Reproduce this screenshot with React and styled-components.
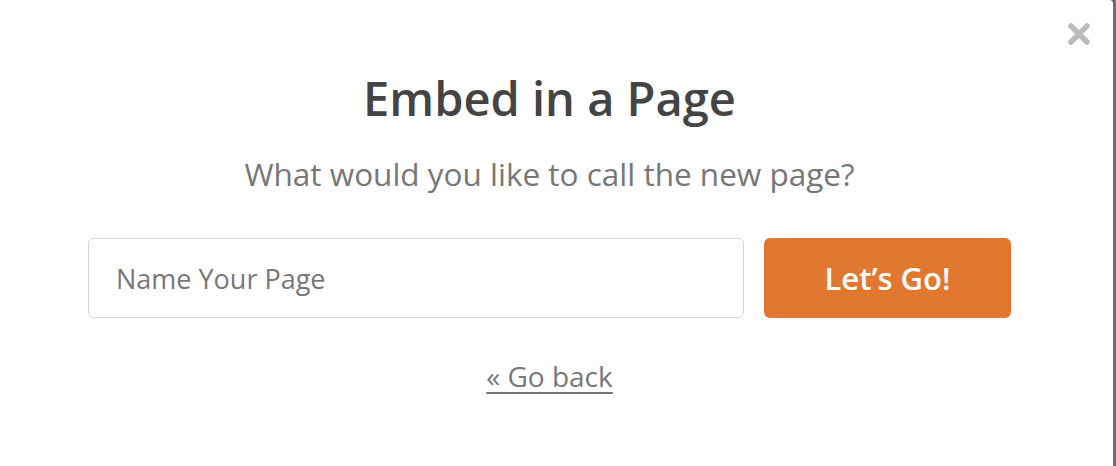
import React from 'react';
import styled, { createGlobalStyle } from 'styled-components';

const Global = createGlobalStyle`
  html, body {
    margin: 0;
    padding: 0;
    background: #6f6f6f;
    font-family: "Open Sans", "Noto Sans", sans-serif;
  }
`;

// 모달 박스
const Modal = styled.div`
  width: 1113px;
  height: 466px;
  background: #ffffff;
  border-top-right-radius: 4px;
  box-sizing: border-box;
  padding: 68px 102px 0 88px;
  position: relative;
  display: flex;
  flex-direction: column;
  align-items: center;
`;

const CloseButton = styled.button`
  position: absolute;
  top: 20px;
  right: 20px;
  width: 28px;
  height: 28px;
  padding: 0;
  border: none;
  background: transparent;
  cursor: pointer;
  display: flex;
  align-items: center;
  justify-content: center;
`;

const Title = styled.h1`
  margin: 0;
  font-size: 47px;
  font-weight: 600;
  color: #444444;
  line-height: 1.3;
`;

const Subtitle = styled.p`
  margin: 25px 0 0;
  font-size: 31.5px;
  font-weight: 400;
  color: #777777;
  line-height: 1.3;
`;

const FormRow = styled.div`
  margin-top: 43px;
  width: 100%;
  display: flex;
  gap: 20px;
`;

const NameInput = styled.input`
  flex: 1;
  height: 80px;
  box-sizing: border-box;
  border: 1px solid #d6d6d6;
  border-radius: 6px;
  padding: 0 27px;
  font-family: inherit;
  font-size: 27px;
  color: #444;
  outline: none;

  &::placeholder {
    color: #777777;
  }
`;

const GoButton = styled.button`
  width: 247px;
  height: 80px;
  border: none;
  border-radius: 6px;
  background: #e27730;
  color: #ffffff;
  font-family: inherit;
  font-size: 31px;
  font-weight: 600;
  cursor: pointer;
`;

const BackLink = styled.a`
  margin-top: 39px;
  font-size: 28px;
  color: #777777;
  text-decoration: underline;
  text-underline-offset: 5px;
  text-decoration-thickness: 2px;
  cursor: pointer;
`;

export default function App() {
  return (
    <>
      <Global />
      <Modal>
        <CloseButton aria-label="close">
          <svg width="24" height="24" viewBox="0 0 24 24">
            <path
              d="M4 4 L20 20 M20 4 L4 20"
              stroke="#bbbbbb"
              strokeWidth="5.5"
              strokeLinecap="round"
            />
          </svg>
        </CloseButton>
        <Title>Embed in a Page</Title>
        <Subtitle>What would you like to call the new page?</Subtitle>
        <FormRow>
          <NameInput placeholder="Name Your Page" />
          <GoButton>Let’s Go!</GoButton>
        </FormRow>
        <BackLink>« Go back</BackLink>
      </Modal>
    </>
  );
}
